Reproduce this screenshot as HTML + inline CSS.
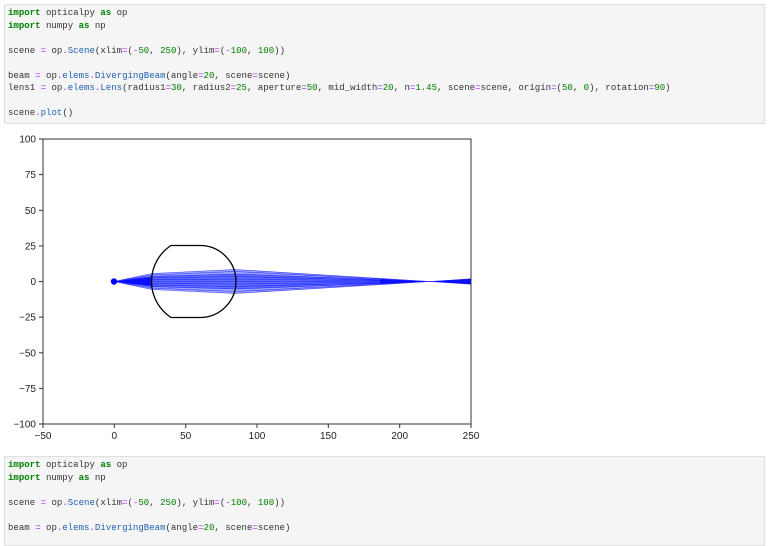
<!DOCTYPE html>
<html><head><meta charset="utf-8"><style>
body{margin:0;background:#fff;width:768px;height:537px;overflow:hidden;position:relative;font-family:"Liberation Sans",sans-serif}
.cell{position:absolute;left:4px;width:761px;background:#f5f5f5;border:1px solid #e0e0e0;box-sizing:border-box}
pre{margin:0;padding:2px 0 0 3px;font-family:"Liberation Mono",monospace;font-size:9.05px;line-height:12.5px;color:#333}
.k{color:#008000;font-weight:bold}.o{color:#aa22ff}.n{color:#008000}.f{color:#2060b0}
svg text{font-family:"Liberation Sans",sans-serif;font-size:10px;fill:#222}
</style></head><body>
<div class="cell" style="top:4px;height:120px"><pre><span class="k">import</span> opticalpy <span class="k">as</span> op
<span class="k">import</span> numpy <span class="k">as</span> np

scene <span class="o">=</span> op<span class="o">.</span><span class="f">Scene</span>(xlim<span class="o">=</span>(<span class="o">-</span><span class="n">50</span>, <span class="n">250</span>), ylim<span class="o">=</span>(<span class="o">-</span><span class="n">100</span>, <span class="n">100</span>))

beam <span class="o">=</span> op<span class="o">.</span><span class="f">elems</span><span class="o">.</span><span class="f">DivergingBeam</span>(angle<span class="o">=</span><span class="n">20</span>, scene<span class="o">=</span>scene)
lens1 <span class="o">=</span> op<span class="o">.</span><span class="f">elems</span><span class="o">.</span><span class="f">Lens</span>(radius1<span class="o">=</span><span class="n">30</span>, radius2<span class="o">=</span><span class="n">25</span>, aperture<span class="o">=</span><span class="n">50</span>, mid_width<span class="o">=</span><span class="n">20</span>, n<span class="o">=</span><span class="n">1.45</span>, scene<span class="o">=</span>scene, origin<span class="o">=</span>(<span class="n">50</span>, <span class="n">0</span>), rotation<span class="o">=</span><span class="n">90</span>)

scene<span class="o">.</span><span class="f">plot</span>()</pre></div>

<svg width="768" height="537" style="position:absolute;left:0;top:0">
<defs><clipPath id="c"><rect x="43" y="139" width="428" height="285"/></clipPath></defs>
<g clip-path="url(#c)">
<polygon points="114,281.5 152,273.5 235,269.5 430,281.5 475,284.5 475,278.5 430,281.5 235,293.5 152,289.5" fill="#4a5cff" opacity="0.55"/>
<polygon points="114,281.5 152,276 235,274 430,281.5 475,283.5 475,279.5 430,281.5 235,289 152,287" fill="#2233ff" opacity="0.5"/>
<g stroke="#0000ff" stroke-width="0.6" fill="none" opacity="0.7">
<polyline points="114,281.5 152,273.5 235,269.5 430,281.5 475,284.5"/>
<polyline points="114,281.5 152,275 235,271.5 430,281.5 475,284"/>
<polyline points="114,281.5 152,276.5 235,274 430,281.5 475,283.5"/>
<polyline points="114,281.5 152,278 235,276.5 430,281.5 475,283"/>
<polyline points="114,281.5 152,279.8 235,279 430,281.5 475,282.3"/>
<polyline points="114,281.5 152,281.5 235,281.5 430,281.5 475,281.5"/>
<polyline points="114,281.5 152,283.2 235,284 430,281.5 475,280.7"/>
<polyline points="114,281.5 152,285 235,286.5 430,281.5 475,280"/>
<polyline points="114,281.5 152,286.5 235,289 430,281.5 475,279.5"/>
<polyline points="114,281.5 152,288 235,291.5 430,281.5 475,279"/>
<polyline points="114,281.5 152,289.5 235,293.5 430,281.5 475,278.5"/>
</g>
<polygon points="114,281.5 152,277 152,286" fill="#0000ff" opacity="0.8"/>
<polygon points="380,279 430,281.5 475,278.5 475,284.5 430,281.5 380,284" fill="#0000ff" opacity="0.7"/>
</g>
<circle cx="114" cy="281.5" r="3.2" fill="#0000ff"/>
<path d="M171,245.5 L200,245.5 A35.5,35.5 0 0 1 200,317.5 L171,317.5 A43,43 0 0 1 171,245.5 Z" fill="none" stroke="#000" stroke-width="1.3"/>
<rect x="43" y="139" width="428" height="285" fill="none" stroke="#333" stroke-width="1"/>
<g stroke="#333" stroke-width="1">
<line x1="43" y1="424" x2="43" y2="428"/><line x1="114.3" y1="424" x2="114.3" y2="428"/><line x1="185.7" y1="424" x2="185.7" y2="428"/><line x1="257" y1="424" x2="257" y2="428"/><line x1="328.3" y1="424" x2="328.3" y2="428"/><line x1="399.7" y1="424" x2="399.7" y2="428"/><line x1="471" y1="424" x2="471" y2="428"/>
<line x1="39" y1="139" x2="43" y2="139"/><line x1="39" y1="174.6" x2="43" y2="174.6"/><line x1="39" y1="210.3" x2="43" y2="210.3"/><line x1="39" y1="245.9" x2="43" y2="245.9"/><line x1="39" y1="281.5" x2="43" y2="281.5"/><line x1="39" y1="317.1" x2="43" y2="317.1"/><line x1="39" y1="352.8" x2="43" y2="352.8"/><line x1="39" y1="388.4" x2="43" y2="388.4"/><line x1="39" y1="424" x2="43" y2="424"/>
</g>
<g text-anchor="middle">
<text x="43" y="439">−50</text><text x="114.3" y="439">0</text><text x="185.7" y="439">50</text><text x="257" y="439">100</text><text x="328.3" y="439">150</text><text x="399.7" y="439">200</text><text x="471" y="439">250</text>
</g>
<g text-anchor="end">
<text x="36" y="142.5">100</text><text x="36" y="178">75</text><text x="36" y="213.8">50</text><text x="36" y="249.4">25</text><text x="36" y="285">0</text><text x="36" y="320.6">−25</text><text x="36" y="356.3">−50</text><text x="36" y="391.9">−75</text><text x="36" y="427.5">−100</text>
</g>
</svg>

<div class="cell" style="top:456px;height:90px"><pre><span class="k">import</span> opticalpy <span class="k">as</span> op
<span class="k">import</span> numpy <span class="k">as</span> np

scene <span class="o">=</span> op<span class="o">.</span><span class="f">Scene</span>(xlim<span class="o">=</span>(<span class="o">-</span><span class="n">50</span>, <span class="n">250</span>), ylim<span class="o">=</span>(<span class="o">-</span><span class="n">100</span>, <span class="n">100</span>))

beam <span class="o">=</span> op<span class="o">.</span><span class="f">elems</span><span class="o">.</span><span class="f">DivergingBeam</span>(angle<span class="o">=</span><span class="n">20</span>, scene<span class="o">=</span>scene)</pre></div>
</body></html>
